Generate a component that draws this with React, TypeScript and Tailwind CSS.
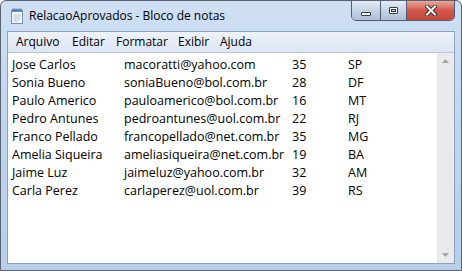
import React from "react";

const rows = [
  ["Jose Carlos", "macoratti@yahoo.com", "35", "SP"],
  ["Sonia Bueno", "soniaBueno@bol.com.br", "28", "DF"],
  ["Paulo Americo", "pauloamerico@bol.com.br", "16", "MT"],
  ["Pedro Antunes", "pedroantunes@uol.com.br", "22", "RJ"],
  ["Franco Pellado", "francopellado@net.com.br", "35", "MG"],
  ["Amelia Siqueira", "ameliasiqueira@net.com.br", "19", "BA"],
  ["Jaime Luz", "jaimeluz@yahoo.com.br", "32", "AM"],
  ["Carla Perez", "carlaperez@uol.com.br", "39", "RS"],
];

const menus = [
  { label: "Arquivo", w: "w-[56px]" },
  { label: "Editar", w: "w-[44px]" },
  { label: "Formatar", w: "w-[62px]" },
  { label: "Exibir", w: "w-[42px]" },
  { label: "Ajuda", w: "w-auto" },
];

function NotepadIcon() {
  return (
    <svg width="14" height="16" viewBox="0 0 14 16">
      <rect x="1.5" y="2.5" width="11" height="13" fill="#f4f7fb" stroke="#7a8ea8" />
      <rect x="2" y="1" width="10" height="3" fill="#6f9fd6" />
      <path d="M3 0.5v3M5 0.5v3M7 0.5v3M9 0.5v3M11 0.5v3" stroke="#44607f" strokeWidth="0.8" />
      <path d="M3.5 7h7M3.5 9h7M3.5 11h7M3.5 13h5" stroke="#a9b8cc" strokeWidth="0.8" />
    </svg>
  );
}

export default function App() {
  return (
    <div
      className="relative h-[271px] w-[462px] overflow-hidden rounded-t-[6px] border border-[#5a6470] bg-gradient-to-b from-[#cfe0f4] via-[#bed4ee] to-[#b7cfea] text-black"
      style={{ fontFamily: '"Open Sans", "Noto Sans", sans-serif' }}
    >
      {/* caption buttons */}
      <div className="absolute right-[6px] top-[-1px] flex h-[21px] overflow-hidden rounded-b-[5px] border border-[#4e5c70]">
        <div className="flex w-[29px] items-center justify-center border-r border-[#4e5c70] bg-gradient-to-b from-[#e4ecf6] via-[#c5d3e4] to-[#aebfd6]">
          <div className="mt-[6px] h-[4px] w-[10px] rounded-[1px] border border-[#2f3b4c] bg-white" />
        </div>
        <div className="flex w-[26px] items-center justify-center border-r border-[#4e5c70] bg-gradient-to-b from-[#e4ecf6] via-[#c5d3e4] to-[#aebfd6]">
          <div className="h-[7px] w-[9px] rounded-[1px] border border-[#2f3b4c] bg-white p-[1px]">
            <div className="h-full w-full border border-[#2f3b4c] bg-[#c5d3e4]" />
          </div>
        </div>
        <div className="flex w-[47px] items-center justify-center bg-gradient-to-b from-[#e9a99e] via-[#d0574a] to-[#c7473b]">
          <svg width="12" height="11" viewBox="0 0 12 11">
            <path d="M2 1.5l8 8M10 1.5l-8 8" stroke="#3b2a2a" strokeWidth="4" strokeLinecap="square" />
            <path d="M2 1.5l8 8M10 1.5l-8 8" stroke="#ffffff" strokeWidth="2" strokeLinecap="square" />
          </svg>
        </div>
      </div>

      {/* title bar */}
      <div className="flex h-[30px] items-center pl-[9px]">
        <NotepadIcon />
        <span className="ml-[5px] text-[12px] text-black">RelacaoAprovados - Bloco de notas</span>
      </div>

      {/* client area */}
      <div className="mx-[6px] flex h-[233px] flex-col border border-[#8da2bd] bg-white">
        <div className="flex h-[21px] items-center border-b border-[#b9c7da] bg-gradient-to-b from-[#eef2fa] to-[#dce5f4] pl-[8px] text-[12px]">
          {menus.map((m) => (
            <span key={m.label} className={`${m.w} pb-[1px]`}>
              {m.label}
            </span>
          ))}
        </div>
        <div className="flex min-h-0 flex-1">
          <div className="flex-1 pl-[4px] pt-[3px] text-[12.5px] leading-[18px]">
            {rows.map((r) => (
              <div key={r[0]} className="grid grid-cols-[112px_168px_56px_1fr]">
                {r.map((c, i) => (
                  <span key={i} className="whitespace-nowrap">
                    {c}
                  </span>
                ))}
              </div>
            ))}
          </div>
          <div className="flex w-[17px] flex-col items-center justify-between bg-[#eaeaed] py-[6px]">
            <svg width="7" height="4" viewBox="0 0 7 4">
              <path d="M0 4L3.5 0L7 4Z" fill="#a0a4aa" />
            </svg>
            <svg width="7" height="4" viewBox="0 0 7 4">
              <path d="M0 0L3.5 4L7 0Z" fill="#a0a4aa" />
            </svg>
          </div>
        </div>
      </div>
    </div>
  );
}
